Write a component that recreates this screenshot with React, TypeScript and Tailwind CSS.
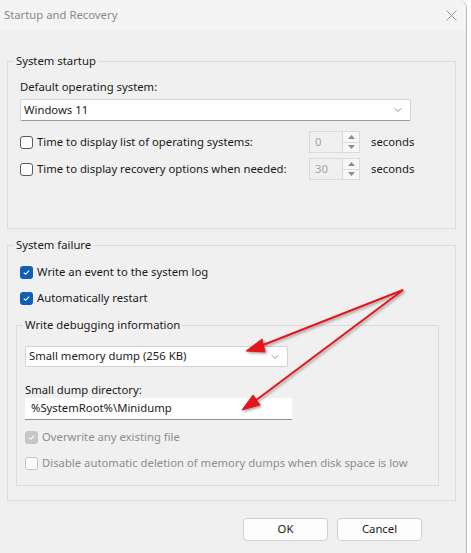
import { ChevronDown } from "lucide-react";

const font = { fontFamily: '"Noto Sans", "Segoe UI", sans-serif' };

const Check = ({ checked = false, disabled = false }: { checked?: boolean; disabled?: boolean }) => {
  if (checked) {
    return (
      <span
        className={`flex h-[13px] w-[13px] shrink-0 items-center justify-center rounded-[3px] ${
          disabled ? "bg-[#c6c6c6]" : "bg-[#0f5fb5]"
        }`}
      >
        <svg width="9" height="9" viewBox="0 0 9 9" fill="none">
          <path d="M1.8 4.6 L3.6 6.3 L7.2 2.6" stroke="white" strokeWidth="1.1" />
        </svg>
      </span>
    );
  }
  return (
    <span
      className={`block h-[13px] w-[13px] shrink-0 rounded-[3px] border bg-white ${
        disabled ? "border-[#c4c4c4]" : "border-[#5c5c5c]"
      }`}
    />
  );
};

const Spinner = ({ value }: { value: string }) => (
  <div className="flex h-[22px]">
    <div className="flex w-[34px] items-center border border-[#dadada] bg-[#f0f0f0] pl-[5px] text-[#a3a3a3]">
      {value}
    </div>
    <div className="flex w-[17px] flex-col border border-l-0 border-[#dadada]">
      <div className="flex flex-1 items-center justify-center border-b border-[#dadada] bg-[#f7f7f7]">
        <svg width="7" height="4" viewBox="0 0 7 4">
          <path d="M0 4 L3.5 0 L7 4 Z" fill="#8c8c8c" />
        </svg>
      </div>
      <div className="flex flex-1 items-center justify-center bg-[#f7f7f7]">
        <svg width="7" height="4" viewBox="0 0 7 4">
          <path d="M0 0 L3.5 4 L7 0 Z" fill="#8c8c8c" />
        </svg>
      </div>
    </div>
  </div>
);

const App = () => {
  return (
    <div className="relative h-[553px] w-[471px] overflow-hidden bg-white text-[11.3px] text-[#1a1a1a]" style={font}>
      <div className="h-full w-[467px] rounded-tr-[8px] border-r border-[#b9b9b9] bg-[#f0f0f0]">
        {/* Title bar */}
        <div className="flex h-[30px] items-center justify-between rounded-tr-[8px] bg-[#f4f4f4] pl-[4px] pr-[8px]">
          <span className="text-[#8a8a8a]">Startup and Recovery</span>
          <svg width="11" height="11" viewBox="0 0 11 11" className="mr-[1px]">
            <path d="M0.5 0.5 L10.5 10.5 M10.5 0.5 L0.5 10.5" stroke="#9a9a9a" strokeWidth="1" />
          </svg>
        </div>

        {/* System startup */}
        <fieldset className="ml-[7px] mt-[23px] w-[449px] border border-[#dcdcdc] pb-[48px] pl-[12px] pt-[10px]">
          <legend className="-ml-[6px] px-[2px] leading-[16px]">System startup</legend>
          <div className="leading-[16px]">Default operating system:</div>
          <div className="mt-[4px] flex h-[22px] w-[391px] items-center justify-between rounded-[2px] border border-[#d2d2d2] border-b-[#9a9a9a] bg-white pl-[3px] pr-[6px]">
            <span>Windows 11</span>
            <ChevronDown className="h-[12px] w-[12px] text-[#6b6b6b]" strokeWidth={1.5} />
          </div>
          <div className="mt-[10px] flex h-[22px] items-center">
            <div className="flex w-[289px] items-center gap-[4px]">
              <Check />
              <span>Time to display list of operating systems:</span>
            </div>
            <Spinner value="0" />
            <span className="ml-[11px]">seconds</span>
          </div>
          <div className="mt-[5px] flex h-[22px] items-center">
            <div className="flex w-[289px] items-center gap-[4px]">
              <Check />
              <span>Time to display recovery options when needed:</span>
            </div>
            <Spinner value="30" />
            <span className="ml-[11px]">seconds</span>
          </div>
        </fieldset>

        {/* System failure */}
        <fieldset className="ml-[7px] mt-[8px] w-[449px] border border-[#dcdcdc] pb-[14px] pl-[8px] pt-[11px]">
          <legend className="-ml-[2px] px-[2px] leading-[16px]">System failure</legend>
          <div className="ml-[4px] flex h-[16px] items-center gap-[4px]">
            <Check checked />
            <span>Write an event to the system log</span>
          </div>
          <div className="ml-[4px] mt-[10px] flex h-[16px] items-center gap-[4px]">
            <Check checked />
            <span>Automatically restart</span>
          </div>

          <fieldset className="mt-[11px] w-[423px] border border-[#dcdcdc] pb-[14px] pl-[8px] pt-[13px]">
            <legend className="-ml-[2px] px-[2px] leading-[16px]">Write debugging information</legend>
            <div className="flex h-[21px] w-[263px] items-center justify-between rounded-[2px] border border-[#d2d2d2] bg-white pl-[3px] pr-[6px]">
              <span>Small memory dump (256 KB)</span>
              <ChevronDown className="h-[12px] w-[12px] text-[#6b6b6b]" strokeWidth={1.5} />
            </div>
            <div className="mt-[15px] leading-[16px]">Small dump directory:</div>
            <div className="flex h-[22px] w-[267px] items-center border-b border-[#8f8f8f] bg-white pl-[6px]">
              %SystemRoot%\Minidump
            </div>
            <div className="mt-[9px] flex h-[16px] items-center gap-[4px] text-[#8d8d8d]">
              <Check checked disabled />
              <span>Overwrite any existing file</span>
            </div>
            <div className="mt-[10px] flex h-[16px] items-center gap-[4px] text-[#8d8d8d]">
              <Check disabled />
              <span>Disable automatic deletion of memory dumps when disk space is low</span>
            </div>
          </fieldset>
        </fieldset>

        {/* Buttons */}
        <div className="mt-[17px] flex justify-end gap-[9px] pr-[44px]">
          <button className="h-[23px] w-[85px] rounded-[4px] border border-[#d0d0d0] bg-[#fdfdfd]">OK</button>
          <button className="h-[23px] w-[85px] rounded-[4px] border border-[#d0d0d0] bg-[#fdfdfd]">Cancel</button>
        </div>
      </div>

      {/* Annotation arrows */}
      <svg className="pointer-events-none absolute left-0 top-0" width="471" height="553">
        <defs>
          <filter id="sh" x="-20%" y="-20%" width="140%" height="140%">
            <feDropShadow dx="1.5" dy="1.5" stdDeviation="1.2" floodColor="#000" floodOpacity="0.35" />
          </filter>
        </defs>
        <g filter="url(#sh)" fill="#e3151a" stroke="#e3151a">
          <line x1="403" y1="290" x2="258" y2="347" strokeWidth="2" />
          <path d="M246 351 L262 339 L265 352 Z" strokeWidth="1" />
          <line x1="403" y1="290" x2="251" y2="404" strokeWidth="2" />
          <path d="M242 410 L253 395 L260 405 Z" strokeWidth="1" />
        </g>
      </svg>
    </div>
  );
};

export default App;
